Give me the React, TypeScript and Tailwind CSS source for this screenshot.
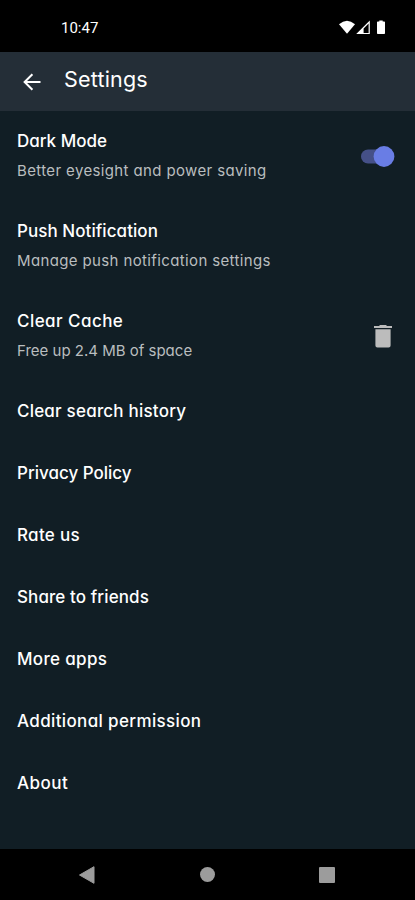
import type { ReactNode } from "react";

type Item = {
  title: string;
  titleClass: string;
  detail?: string;
  detailClass?: string;
  action?: ReactNode;
};

function Toggle() {
  return (
    <svg className="mt-[35px] h-[22px] w-[36px]" viewBox="0 0 36 22" aria-label="On">
      <rect x="2" y="4.5" width="30" height="14" rx="7" fill="#455088" />
      <circle cx="25" cy="11.5" r="10.4" fill="#697de5" />
    </svg>
  );
}

function Trash() {
  return (
    <svg className="mt-[34px] mr-[3px] h-[24px] w-[18px]" viewBox="0 0 18 24" fill="#bcbcbc">
      <path d="M0 2h5l1-1h6l1 1h5v2H0zM1.4 5.3h15.2V21.4a2 2 0 0 1-2 2H3.4a2 2 0 0 1-2-2z" />
    </svg>
  );
}

const items: Item[] = [
  { title: "Dark Mode", titleClass: "tracking-normal", detail: "Better eyesight and power saving", detailClass: "tracking-[0.37px]", action: <Toggle /> },
  { title: "Push Notification", titleClass: "tracking-[0.06px]", detail: "Manage push notification settings", detailClass: "tracking-[0.37px]" },
  { title: "Clear Cache", titleClass: "tracking-[0.45px]", detail: "Free up 2.4 MB of space", detailClass: "tracking-normal", action: <Trash /> },
  { title: "Clear search history", titleClass: "tracking-[0.21px]" },
  { title: "Privacy Policy", titleClass: "tracking-normal" },
  { title: "Rate us", titleClass: "tracking-[0.3px]" },
  { title: "Share to friends", titleClass: "tracking-[0.1px]" },
  { title: "More apps", titleClass: "tracking-[0.33px]" },
  { title: "Additional permission", titleClass: "tracking-[0.36px]" },
  { title: "About", titleClass: "tracking-[0.5px]" },
];

function Row({ item }: { item: Item }) {
  return (
    <li className={`flex justify-between pr-5 pl-[17px] ${item.detail ? "h-[90px]" : "h-[62px]"}`}>
      <div className="pt-[19px] whitespace-nowrap">
        <div className={`text-[17px] leading-6 font-medium text-white ${item.titleClass}`}>{item.title}</div>
        {item.detail && (
          <div className={`mt-[6px] text-[15px] leading-6 text-[#b9bdbf] ${item.detailClass}`}>{item.detail}</div>
        )}
      </div>
      {item.action}
    </li>
  );
}

export default function App() {
  return (
    <div className="flex h-[900px] w-[415px] flex-col overflow-hidden bg-[#111e25] font-[Inter,sans-serif] [font-feature-settings:'cv11']">
      <div className="flex h-[52px] shrink-0 items-center justify-between bg-black pt-1 pr-[27px] pl-[61px] text-white">
        <span className="font-[Roboto,sans-serif] text-[15px] leading-6">10:47</span>
        <svg className="h-4 w-[50px]" viewBox="0 0 50 16" fill="white">
          <path d="M1 4.3Q9 -2.8 17 4.3L9 13.7z" />
          <path fillRule="evenodd" d="M31.8 .4V14.1H18.2zM30.6 3.4L25.6 8.4V12.9H30.6z" />
          <path d="M39.8 1.5h1.5V.5h3.4v1h1.5q.8 0 .8.8v11q0 .8-.8.8h-6.4q-.8 0-.8-.8v-11q0-.8.8-.8z" />
        </svg>
      </div>
      <header className="flex h-[59px] shrink-0 bg-[#242e37] pl-[23px]">
        <svg className="mt-[21px] h-[18px] w-[18px]" viewBox="0 0 18 18" fill="none" stroke="white" strokeWidth="2">
          <path d="M17.5 9H2M9.4 1.2L1.6 9l7.8 7.8" />
        </svg>
        <h1 className="ml-[23px] pt-3 text-[21.5px] leading-[30px] tracking-[0.2px] text-white">Settings</h1>
      </header>
      <ul className="-mt-px flex-1">
        {items.map((item) => (
          <Row key={item.title} item={item} />
        ))}
      </ul>
      <nav className="flex h-[51px] shrink-0 items-center justify-between bg-black pr-[80px] pl-[79px]">
        <svg className="h-[18px] w-4" viewBox="0 0 16 18" fill="#9c9c9c">
          <path d="M.5 9L15 .7v16.6z" stroke="#9c9c9c" strokeLinejoin="round" />
        </svg>
        <div className="size-[15px] rounded-full bg-[#9c9c9c]" />
        <div className="size-[16px] rounded-[1px] bg-[#9c9c9c]" />
      </nav>
    </div>
  );
}
